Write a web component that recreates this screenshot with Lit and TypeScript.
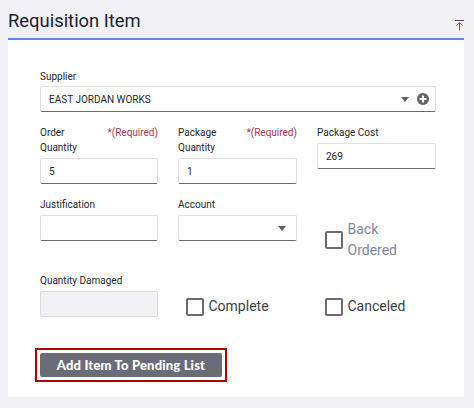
import { LitElement, html, css } from "lit";
import { customElement } from "lit/decorators.js";

@customElement("app-root")
export class AppRoot extends LitElement {
  static styles = css`
    :host { display: block; width: 474px; height: 408px; background: #f0f0f5; font-family: Roboto, sans-serif; color: #212529; box-sizing: border-box; padding: 0 10px 11px 8px; overflow: hidden; }
    .head { height: 38px; border-bottom: 2px solid #5f86ee; display: flex; justify-content: space-between; box-sizing: content-box; }
    h1 { margin: 0; font-size: 18.4px; font-weight: 400; line-height: 21px; padding-top: 10px; color: #1c2430; }
    .pin { margin: 20px 0 0 0; width: 9px; height: 11px; display: block; }
    .body { background: #fff; height: 357px; padding: 29px 28px 0 32px; box-sizing: border-box; }
    .lbl { font-size: 10px; line-height: 15px; color: #24282f; display: flex; justify-content: space-between; }
    .req { color: #a5344f; }
    .box { height: 26px; box-sizing: border-box; border: 1px solid #e0e0e0; border-bottom: 1px solid #6b6b6b; border-radius: 2px; font-size: 10px; padding: 0 8px; display: flex; align-items: center; color: #1c1f24; background: #fff; }
    .box.off { background: #f0f0f5; border-color: #dcdce0; }
    .sup { margin-top: 2px; justify-content: space-between; padding-right: 6px; }
    .icons { display: flex; align-items: center; gap: 8px; }
    .caret { width: 0; height: 0; border: 4px solid transparent; border-top: 5px solid #5f6368; border-bottom: 0; }
    .grid { display: grid; grid-template-columns: 118px 119px 119px; column-gap: 20px; align-items: start; }
    .r2 { margin-top: 13px; height: 59px; }
    .r3 { margin-top: 13px; height: 44px; }
    .r4 { margin-top: 32px; }
    .mt3 { margin-top: 3px; }
    .acct { justify-content: flex-end; padding-right: 10px; }
    .chk { display: flex; align-items: center; gap: 4.5px; font-size: 14px; line-height: 21px; color: #3a3f47; margin-left: 8px; }
    .chk i { width: 18px; height: 18px; box-sizing: border-box; border: 2px solid #6b6b70; border-radius: 2px; flex: none; }
    .chk.mute { color: #7d8a99; margin-top: 22px; }
    .chk.low { margin-top: 23px; }
    .btnwrap { margin: 31px 0 0 -5px; width: 192px; height: 34px; box-sizing: border-box; border: 2px solid #b00000; padding: 3px; }
    button { display: block; width: 100%; height: 100%; border: 0; border-radius: 2px; background: #6c6c78; color: #fff; font-family: Lato, sans-serif; font-weight: 900; font-size: 13px; letter-spacing: .17px; padding: 0; }
  `;
  render() {
    return html`
      <div class="head">
        <h1>Requisition Item</h1>
        <svg class="pin" viewBox="0 0 9 11" fill="none">
          <path d="M0 .5H9" stroke="#555"/>
          <path d="M4.5 10.5V3M1.5 5.5l3-3 3 3" stroke="#7a5a90"/>
        </svg>
      </div>
      <div class="body">
        <div class="lbl">Supplier</div>
        <div class="box sup">
          <span>EAST JORDAN WORKS</span>
          <span class="icons"><span class="caret"></span>
            <svg width="12" height="12" viewBox="0 0 12 12"><circle cx="6" cy="6" r="6" fill="#5f6368"/><path d="M6 2.5v7M2.5 6h7" stroke="#fff" stroke-width="2.2"/></svg>
          </span>
        </div>
        <div class="grid r2">
          <div>
            <div class="lbl"><span>Order<br />Quantity</span><span class="req">*(Required)</span></div>
            <div class="box mt3">5</div>
          </div>
          <div>
            <div class="lbl"><span>Package<br />Quantity</span><span class="req">*(Required)</span></div>
            <div class="box mt3">1</div>
          </div>
          <div>
            <div class="lbl">Package Cost</div>
            <div class="box mt3">269</div>
          </div>
        </div>
        <div class="grid r3">
          <div>
            <div class="lbl">Justification</div>
            <div class="box mt3"></div>
          </div>
          <div>
            <div class="lbl">Account</div>
            <div class="box mt3 acct"><span class="caret"></span></div>
          </div>
          <div class="chk mute"><i></i><span>Back<br />Ordered</span></div>
        </div>
        <div class="grid r4">
          <div>
            <div class="lbl">Quantity Damaged</div>
            <div class="box mt3 off"></div>
          </div>
          <div class="chk low"><i></i><span>Complete</span></div>
          <div class="chk low"><i></i><span>Canceled</span></div>
        </div>
        <div class="btnwrap"><button>Add Item To Pending List</button></div>
      </div>
    `;
  }
}
